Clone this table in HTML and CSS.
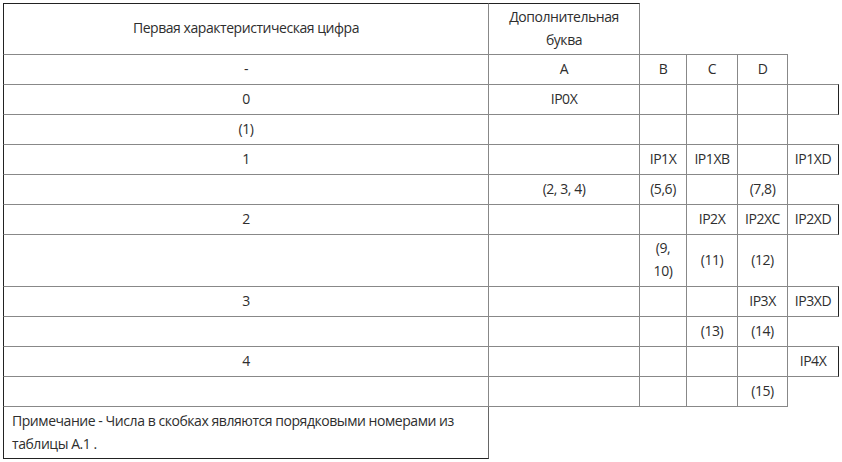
FILE: index.html
```html
<!DOCTYPE html>
<html lang="ru">
<head>
<meta charset="utf-8">
<title>Таблица IP</title>
<link rel="stylesheet" href="styles.css">
</head>
<body>
<div class="grid">
  <div class="cell c0 top hd">Первая характеристическая цифра</div>
  <div class="cell top two">Дополнительная<br>буква</div>

  <div class="cell c0">-</div>
  <div class="cell">A</div>
  <div class="cell up">B</div>
  <div class="cell up">C</div>
  <div class="cell up">D</div>

  <div class="cell c0">0</div>
  <div class="cell">IP0X</div>
  <div class="cell"></div>
  <div class="cell"></div>
  <div class="cell"></div>
  <div class="cell e"></div>

  <div class="cell c0">(1)</div>
  <div class="cell"></div>
  <div class="cell"></div>
  <div class="cell"></div>
  <div class="cell"></div>

  <div class="cell c0">1</div>
  <div class="cell"></div>
  <div class="cell">IP1X</div>
  <div class="cell">IP1XB</div>
  <div class="cell"></div>
  <div class="cell e">IP1XD</div>

  <div class="cell c0"></div>
  <div class="cell">(2, 3, 4)</div>
  <div class="cell">(5,6)</div>
  <div class="cell"></div>
  <div class="cell">(7,8)</div>

  <div class="cell c0">2</div>
  <div class="cell"></div>
  <div class="cell"></div>
  <div class="cell">IP2X</div>
  <div class="cell">IP2XC</div>
  <div class="cell e">IP2XD</div>

  <div class="cell c0"></div>
  <div class="cell"></div>
  <div class="cell two">(9,<br>10)</div>
  <div class="cell">(11)</div>
  <div class="cell">(12)</div>

  <div class="cell c0">3</div>
  <div class="cell"></div>
  <div class="cell"></div>
  <div class="cell"></div>
  <div class="cell">IP3X</div>
  <div class="cell e">IP3XD</div>

  <div class="cell c0"></div>
  <div class="cell"></div>
  <div class="cell"></div>
  <div class="cell">(13)</div>
  <div class="cell">(14)</div>

  <div class="cell c0">4</div>
  <div class="cell"></div>
  <div class="cell"></div>
  <div class="cell"></div>
  <div class="cell"></div>
  <div class="cell e">IP4X</div>

  <div class="cell c0"></div>
  <div class="cell"></div>
  <div class="cell"></div>
  <div class="cell"></div>
  <div class="cell">(15)</div>

  <div class="cell c0 note">Примечание - Числа в скобках являются порядковыми номерами из таблицы А.1 .</div>
</div>
</body>
</html>
```

FILE: styles.css
```css
html, body {
  margin: 0;
  padding: 0;
  background: #fff;
}

body {
  font-family: "Open Sans", "Liberation Sans", sans-serif;
  font-size: 14px;
  letter-spacing: -0.45px;
  color: #2e2e2e;
}

.grid {
  display: grid;
  grid-template-columns: 486px 151px 47px 51px 50px 51px;
  grid-template-rows: 52px repeat(6, 30px) 52px repeat(4, 30px) 52px;
  margin: 3px 0 0 3px;
  width: max-content;
}

.cell {
  box-sizing: border-box;
  border-right: 1px solid #888;
  border-bottom: 1px solid #888;
  display: flex;
  align-items: center;
  justify-content: center;
  text-align: center;
  line-height: 23px;
  padding-bottom: 3px;
  white-space: nowrap;
}

.c0 {
  grid-column: 1;
  border-left: 1px solid #222;
}

.top {
  border-top: 1px solid #222;
}

.up {
  margin-top: -1px;
  border-top: 1px solid #888;
}

.e {
  grid-column: 6;
  margin-top: -1px;
  border-top: 1px solid #888;
  border-right: 1px solid #222;
}

.note {
  justify-content: flex-start;
  text-align: left;
  white-space: normal;
  padding: 0 8px 2px;
  border-right-color: #666;
  border-bottom: 1px solid #222;
}
```
